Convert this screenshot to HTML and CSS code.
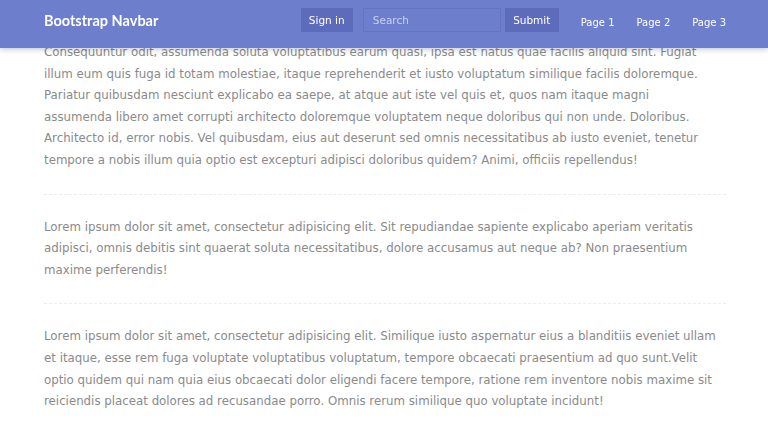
FILE: index.html
```html
<!DOCTYPE html>
<html lang="en">
<head>
<meta charset="utf-8">
<title>Bootstrap Navbar</title>
<link rel="stylesheet" href="styles.css">
</head>
<body>
<nav class="navbar">
  <div class="nav-inner">
    <a class="brand" href="#">Bootstrap Navbar</a>
    <div class="nav-right">
      <button class="btn btn-sign">Sign in</button>
      <form class="search">
        <input class="search-input" type="text" placeholder="Search">
        <button class="btn btn-submit" type="button">Submit</button>
      </form>
      <ul class="links">
        <li><a href="#">Page 1</a></li>
        <li><a href="#">Page 2</a></li>
        <li><a href="#">Page 3</a></li>
      </ul>
    </div>
  </div>
</nav>
<main class="content">
  <p>Consequuntur odit, assumenda soluta voluptatibus earum quasi, ipsa est natus quae facilis aliquid sint. Fugiat<br>
  illum eum quis fuga id totam molestiae, itaque reprehenderit et iusto voluptatum similique facilis doloremque.<br>
  Pariatur quibusdam nesciunt explicabo ea saepe, at atque aut iste vel quis et, quos nam itaque magni<br>
  assumenda libero amet corrupti architecto doloremque voluptatem neque doloribus qui non unde. Doloribus.<br>
  Architecto id, error nobis. Vel quibusdam, eius aut deserunt sed omnis necessitatibus ab iusto eveniet, tenetur<br>
  tempore a nobis illum quia optio est excepturi adipisci doloribus quidem? Animi, officiis repellendus!</p>
  <div class="line"></div>
  <p>Lorem ipsum dolor sit amet, consectetur adipisicing elit. Sit repudiandae sapiente explicabo aperiam veritatis<br>
  adipisci, omnis debitis sint quaerat soluta necessitatibus, dolore accusamus aut neque ab? Non praesentium<br>
  maxime perferendis!</p>
  <div class="line"></div>
  <p>Lorem ipsum dolor sit amet, consectetur adipisicing elit. Similique iusto aspernatur eius a blanditiis eveniet ullam<br>
  et itaque, esse rem fuga voluptate voluptatibus voluptatum, tempore obcaecati praesentium ad quo sunt.Velit<br>
  optio quidem qui nam quia eius obcaecati dolor eligendi facere tempore, ratione rem inventore nobis maxime sit<br>
  reiciendis placeat dolores ad recusandae porro. Omnis rerum similique quo voluptate incidunt!</p>
</main>
</body>
</html>
```
FILE: styles.css
```css
* { box-sizing: border-box; }
html, body { margin: 0; padding: 0; }
body {
  background: #fff;
  font-family: "DejaVu Sans", "Open Sans", sans-serif;
  color: #8a8a8a;
  overflow: hidden;
}
.navbar {
  position: fixed;
  top: 0; left: 0; right: 0;
  height: 48px;
  background: #6d7fcc;
  box-shadow: 0 1px 6px rgba(0,0,0,0.25);
  z-index: 10;
}
.nav-inner {
  height: 100%;
  padding: 0 42px 0 44px;
  display: flex;
  align-items: center;
  justify-content: space-between;
}
.brand {
  color: #fff;
  font-family: Lato, "Open Sans", sans-serif;
  font-weight: 700;
  font-size: 14.5px;
  text-decoration: none;
  margin-top: -8px;
}
.nav-right {
  display: flex;
  align-items: center;
  margin-top: -8px;
}
.btn {
  font-family: inherit;
  font-size: 10.5px;
  color: #fff;
  background: #5c6cbb;
  border: none;
  height: 24px;
  padding: 0;
  cursor: pointer;
}
.btn-sign { width: 52px; }
.btn-submit { width: 54px; }
.search {
  display: flex;
  align-items: center;
  margin-left: 10px;
  gap: 4px;
}
.search-input {
  width: 138px;
  height: 24px;
  background: #6d7fcc;
  border: 1px solid #6474c2;
  color: #fff;
  font-family: inherit;
  font-size: 10.5px;
  padding: 0 9px;
}
.search-input::placeholder { color: #c9d0f0; }
.links {
  list-style: none;
  margin: 0 0 0 22px;
  padding: 0;
  display: flex;
  gap: 22px;
}
.links a {
  color: #fff;
  font-size: 10px;
  text-decoration: none;
}
.content {
  padding: 42px 10px 0 44px;
}
.content p {
  margin: 0;
  font-size: 11.8px;
  line-height: 21.6px;
}
.line {
  margin: 22px 32px 22px 0;
  border-bottom: 1px dashed #ececec;
}
```
